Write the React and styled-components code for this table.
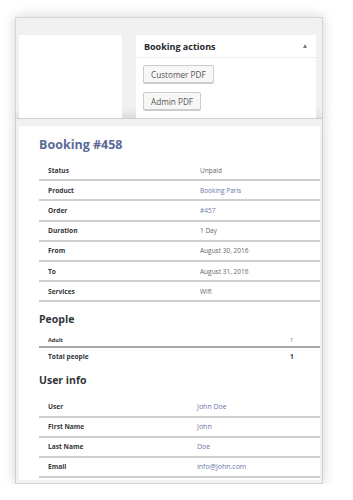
import React from 'react';
import styled, { createGlobalStyle } from 'styled-components';

const GlobalStyle = createGlobalStyle`
  html, body {
    margin: 0;
    padding: 0;
    background: #ffffff;
  }
  body {
    font-family: "Open Sans", "Liberation Sans", sans-serif;
  }
`;

const Page = styled.div`
  width: 308px;
  padding: 17px 0 0 15px;
`;

const BackPanel = styled.div`
  height: 101px;
  box-sizing: border-box;
  background: #f1f1f1;
  border: 1px solid #d6d6d6;
  border-bottom: none;
  box-shadow: 0 0 12px rgba(0, 0, 0, 0.18);
  padding: 17px 6px 0 3px;
  display: flex;
  gap: 14px;
  overflow: hidden;
`;

const SideBox = styled.div`
  width: 103px;
  flex: none;
  background: #fff;
`;

const MetaBox = styled.div`
  flex: 1;
  background: #fff;
`;

const MetaHeader = styled.div`
  height: 23px;
  box-sizing: border-box;
  border-bottom: 1px solid #eeeeee;
  display: flex;
  align-items: center;
  justify-content: space-between;
  padding: 0 9px 0 8px;
  font-size: 9px;
  font-weight: 700;
  color: #23282d;
`;

const Caret = styled.span`
  width: 0;
  height: 0;
  border-left: 2.5px solid transparent;
  border-right: 2.5px solid transparent;
  border-bottom: 4px solid #777;
`;

const MetaBody = styled.div`
  display: flex;
  flex-direction: column;
  align-items: flex-start;
  gap: 9px;
  padding: 7px 7px 0;
`;

const ActionButton = styled.button`
  height: 18px;
  box-sizing: border-box;
  padding: 0 7px;
  font-family: "Open Sans", "Liberation Sans", sans-serif;
  font-size: 8.2px;
  color: #555;
  background: #f7f7f7;
  border: 1px solid #cccccc;
  border-radius: 2px;
  box-shadow: 0 1px 0 #ccc;
`;

const FrontPanel = styled.div`
  background: #f1f1f1;
  border: 1px solid #d0d0d0;
  box-shadow: 0 0 12px rgba(0, 0, 0, 0.18);
  padding: 7px 2px 3px 3px;
`;

const Card = styled.div`
  background: #fff;
  padding: 9px 0 2px 20px;
`;

const Title = styled.h1`
  margin: 0 0 6px;
  font-size: 12.5px;
  line-height: 20px;
  font-weight: 700;
  color: #5b6a99;
`;

const Heading = styled.h2`
  margin: ${({ $top }) => $top}px 0 0;
  font-size: 10.5px;
  line-height: 16px;
  font-weight: 700;
  color: #32373c;
`;

const Table = styled.div`
  margin-top: ${({ $top }) => $top || 0}px;
`;

const Row = styled.div`
  display: grid;
  grid-template-columns: ${({ $col }) => $col}px 1fr;
  align-items: center;
  height: ${({ $h }) => $h || 20.2}px;
  box-sizing: border-box;
  border-bottom: ${({ $line }) => ($line === false ? 'none' : `2px solid ${$line || '#cfcfcf'}`)};
  padding-left: 9px;
`;

const Label = styled.span`
  font-size: ${({ $size }) => $size || 6.6}px;
  font-weight: 700;
  color: #32373c;
`;

const Value = styled.span`
  font-size: ${({ $size }) => $size || 6.5}px;
  font-weight: ${({ $bold }) => ($bold ? 700 : 400)};
  color: ${({ $tone }) => ($tone === 'link' ? '#6b77a9' : $tone === 'strong' ? '#32373c' : '#666')};
`;

const bookingRows = [
  ['Status', 'Unpaid'],
  ['Product', 'Booking Paris', 'link'],
  ['Order', '#457', 'link'],
  ['Duration', '1 Day'],
  ['From', 'August 30, 2016'],
  ['To', 'August 31, 2016'],
  ['Services', 'Wifi'],
];

const userRows = [
  ['User', 'John Doe'],
  ['First Name', 'John'],
  ['Last Name', 'Doe'],
  ['Email', 'info@john.com'],
];

const App = () => (
  <>
    <GlobalStyle />
    <Page>
      <BackPanel>
        <SideBox />
        <MetaBox>
          <MetaHeader>
            Booking actions
            <Caret />
          </MetaHeader>
          <MetaBody>
            <ActionButton>Customer PDF</ActionButton>
            <ActionButton>Admin PDF</ActionButton>
          </MetaBody>
        </MetaBox>
      </BackPanel>

      <FrontPanel>
        <Card>
          <Title>Booking #458</Title>
          <Table>
            {bookingRows.map(([label, value, tone]) => (
              <Row key={label} $col={152}>
                <Label>{label}</Label>
                <Value $tone={tone}>{value}</Value>
              </Row>
            ))}
          </Table>

          <Heading $top={9}>People</Heading>
          <Table $top={6}>
            <Row $col={242} $h={15} $line="#a8a8a8">
              <Label $size={5.5}>Adult</Label>
              <Value $size={5.5}>1</Value>
            </Row>
            <Row $col={242} $h={16} $line={false}>
              <Label>Total people</Label>
              <Value $bold $tone="strong">1</Value>
            </Row>
          </Table>

          <Heading $top={8}>User info</Heading>
          <Table $top={9}>
            {userRows.map(([label, value]) => (
              <Row key={label} $col={149}>
                <Label>{label}</Label>
                <Value $tone="link" $size={7}>{value}</Value>
              </Row>
            ))}
          </Table>
        </Card>
      </FrontPanel>
    </Page>
  </>
);

export default App;
